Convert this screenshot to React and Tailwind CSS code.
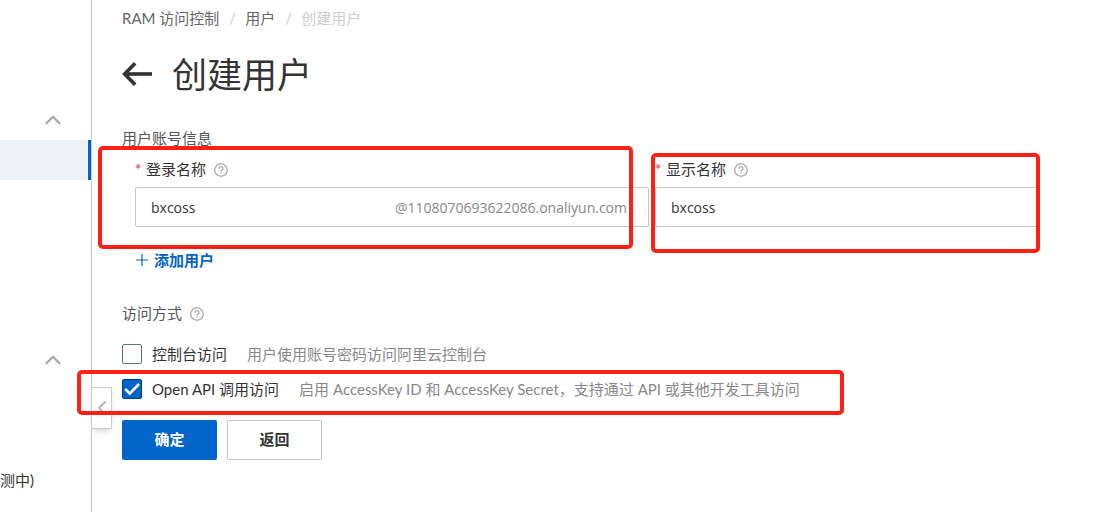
import React, { useState } from "react";
import { ChevronLeft, ChevronUp } from "lucide-react";

const HelpIcon = () => (
  <svg
    className="ml-2 mt-[2px] h-[14px] w-[14px] shrink-0 text-[#999999]"
    viewBox="0 0 14 14"
    fill="none"
    stroke="currentColor"
    strokeWidth="1.1"
  >
    <circle cx="7" cy="7" r="6.3" />
    <path d="M5 5.7C5 4.4 5.9 3.7 7 3.7s2 .7 2 1.8c0 1.4-2 1.4-2 2.9" />
    <path d="M7 9.4v1.2" />
  </svg>
);

const BackArrow = () => (
  <svg
    className="h-[26px] w-[30px]"
    viewBox="0 0 30 26"
    fill="none"
    stroke="#333333"
    strokeWidth="3.6"
  >
    <path d="M30 13H3" />
    <path d="M13.2 2.2L2.6 13l10.6 10.8" />
  </svg>
);

const Sidebar = () => (
  <nav className="w-[92px] shrink-0 border-r border-[#c0c6cc] pt-[100px] text-[#333333]">
    <button
      type="button"
      aria-label="Collapse group"
      className="flex h-10 w-full items-center justify-end pr-[25px] text-[#a6a6a6]"
    >
      <ChevronUp className="h-[26px] w-[26px]" strokeWidth={2} />
    </button>
    <a
      href="#users"
      aria-label="Users"
      className="block h-10 border-r-3 border-[#0064c8] bg-[#eff3f8]"
    ></a>
    <button
      type="button"
      aria-label="Collapse group"
      className="mt-40 flex h-10 w-full items-center justify-end pr-[25px] text-[#a6a6a6]"
    >
      <ChevronUp className="h-[26px] w-[26px]" strokeWidth={2} />
    </button>
    <a href="#beta" className="mt-20 flex h-10 items-center">
      测中)
    </a>
  </nav>
);

const Field = ({ id, label, suffix, value, onChange, className, boxClass }) => (
  <div className={className}>
    <div className="flex h-6 items-center">
      <span className="w-[11px] text-[#d93026]">*</span>
      <label htmlFor={id} className="text-[#333333]">
        {label}
      </label>
      <HelpIcon />
    </div>
    <div
      className={`mt-[6px] flex h-10 items-center border-[#c0c6cc] pl-[15px] pt-px font-['Open_Sans','Noto_Sans_CJK_SC',sans-serif] text-sm ${boxClass}`}
    >
      <input
        id={id}
        type="text"
        value={value}
        onChange={(e) => onChange(e.target.value)}
        className="min-w-0 flex-1 bg-transparent text-[#333333] outline-none"
      />
      {suffix && <span className="pr-[21px] text-[#888888]">{suffix}</span>}
    </div>
  </div>
);

const AccessOption = ({ id, label, hint, checked, onChange }) => (
  <div className="flex h-5 items-center">
    <span className="grid h-5 w-5 shrink-0">
      <input
        id={id}
        type="checkbox"
        checked={checked}
        onChange={(e) => onChange(e.target.checked)}
        className="col-start-1 row-start-1 h-5 w-5 appearance-none rounded-xs border border-[#4f7399] bg-white checked:border-[#003f80] checked:bg-[#0064c8]"
      />
      {checked && (
        <svg
          className="pointer-events-none col-start-1 row-start-1 h-5 w-5"
          viewBox="0 0 20 20"
          fill="none"
          stroke="#ffffff"
          strokeWidth="2.6"
        >
          <path d="M3.2 10l4.6 4.6L17 5" />
        </svg>
      )}
    </span>
    <label htmlFor={id} className="ml-[10px] whitespace-nowrap text-[#333333]">
      {label}
    </label>
    <span className="ml-5 whitespace-nowrap text-[#888888]">{hint}</span>
  </div>
);

const App = () => {
  const [loginName, setLoginName] = useState("bxcoss");
  const [displayName, setDisplayName] = useState("bxcoss");
  const [consoleAccess, setConsoleAccess] = useState(false);
  const [apiAccess, setApiAccess] = useState(true);

  return (
    <div className="relative flex min-h-screen overflow-hidden bg-white font-['Lato','Noto_Sans_CJK_SC',sans-serif] text-[15px] leading-6">
      <Sidebar />

      {/* Sidebar collapse handle */}
      <button
        type="button"
        aria-label="Collapse sidebar"
        className="absolute left-[91px] top-[387px] flex h-[42px] w-[21px] items-center justify-center border border-[#c8ccd0] bg-white text-[#b8b8b8] shadow-md"
      >
        <ChevronLeft className="h-6 w-6 shrink-0" strokeWidth={2} />
      </button>

      <main className="min-w-0 flex-1 pl-[30px] pr-[62px]">
        <nav className="flex h-9 items-center text-[#666666]">
          <a href="#ram">RAM 访问控制</a>
          <span className="w-[26px] text-center text-[#cccccc]">/</span>
          <a href="#users">用户</a>
          <span className="w-[26px] text-center text-[#cccccc]">/</span>
          <span className="text-[#cccccc]">创建用户</span>
        </nav>

        <div className="flex h-[76px] items-center gap-5">
          <a href="#back" aria-label="Back">
            <BackArrow />
          </a>
          <h1 className="text-[35px] leading-10 text-[#333333]">创建用户</h1>
        </div>

        <form onSubmit={(e) => e.preventDefault()}>
          <h2 className="mt-[14px] text-[#555555]">用户账号信息</h2>
          <div className="mt-[7px] flex gap-[6px] pl-[13px]">
            <Field
              id="loginName"
              label="登录名称"
              suffix="@1108070693622086.onaliyun.com"
              value={loginName}
              onChange={setLoginName}
              className="w-[514px] shrink-0"
              boxClass="rounded-xs border"
            />
            <Field
              id="displayName"
              label="显示名称"
              value={displayName}
              onChange={setDisplayName}
              className="min-w-0 flex-1"
              boxClass="rounded-l-xs border-y border-l"
            />
          </div>
          <button
            type="button"
            className="ml-[13px] mt-[21px] flex h-6 items-center gap-[5px] font-bold text-[#0064c8]"
          >
            <svg
              className="h-[14px] w-[14px]"
              viewBox="0 0 14 14"
              stroke="currentColor"
              strokeWidth="1.2"
            >
              <path d="M7 1v12M1 7h12" />
            </svg>
            添加用户
          </button>

          <h2 className="mt-[29px] flex items-center text-[#555555]">
            访问方式
            <HelpIcon />
          </h2>
          <div className="mt-[19px] flex flex-col gap-[15px]">
            <AccessOption
              id="consoleAccess"
              label="控制台访问"
              hint="用户使用账号密码访问阿里云控制台"
              checked={consoleAccess}
              onChange={setConsoleAccess}
            />
            <AccessOption
              id="apiAccess"
              label="Open API 调用访问"
              hint="启用 AccessKey ID 和 AccessKey Secret，支持通过 API 或其他开发工具访问"
              checked={apiAccess}
              onChange={setApiAccess}
            />
          </div>

          <div className="mt-[21px] flex gap-[10px] font-bold">
            <button
              type="submit"
              className="h-10 w-[95px] rounded-xs bg-[#0064c8] pb-[2px] text-white"
            >
              确定
            </button>
            <button
              type="button"
              className="h-10 w-[95px] rounded-xs border border-[#c0c6cc] pb-[2px] text-[#333333]"
            >
              返回
            </button>
          </div>
        </form>
      </main>

      {/* Red highlight frames */}
      <div className="pointer-events-none absolute left-[98px] top-[146px] h-[103px] w-[535px] rounded-[5px] border-4 border-[#ff2015]"></div>
      <div className="pointer-events-none absolute left-[651px] top-[153px] h-[100px] w-[389px] rounded-[5px] border-4 border-[#ff2015]"></div>
      <div className="pointer-events-none absolute left-[77px] top-[370px] h-[45px] w-[767px] rounded-[5px] border-4 border-[#ff2015]"></div>
    </div>
  );
};

export default App;
